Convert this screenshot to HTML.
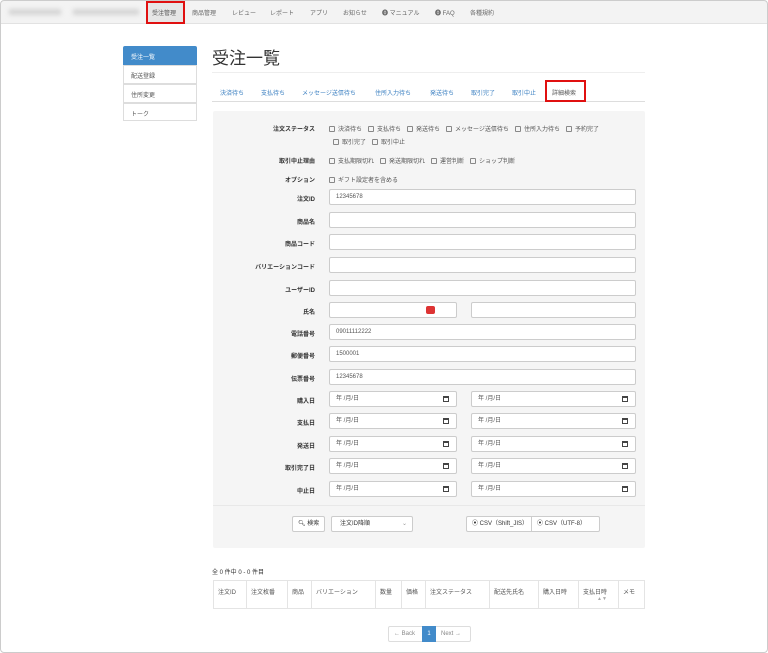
<!DOCTYPE html>
<html><head><meta charset="utf-8">
<style>
*{box-sizing:border-box;margin:0;padding:0}
body{width:768px;height:653px;background:#fff;font-family:"Liberation Sans","Noto Sans CJK JP",sans-serif;font-size:7px;color:#333;position:relative;overflow:hidden}
.a{position:absolute;white-space:nowrap}
.frame{position:absolute;left:0;top:0;width:768px;height:653px;border:1px solid #ccc;border-radius:4px}
.nav{position:absolute;left:1px;top:1px;width:766px;height:23px;background:#f3f3f3;border-bottom:1px solid #e2e2e2}
.blur{background:#d5d5d5;filter:blur(2px);height:6px;top:9px}
.ni{top:8px;color:#666;font-size:6px}
.side{position:absolute;left:123px;width:74px;height:19px;border:1px solid #ddd;padding:5px 7px;font-size:6px;color:#555}
.tab{top:88px;color:#3a7fc1;font-size:6px}
.lbl{position:absolute;right:453px;font-weight:bold;font-size:6px;color:#333;white-space:nowrap}
.in{position:absolute;background:#fff;border:1px solid #ccc;border-radius:2px;height:16px;font-size:6px;color:#555;padding:0 6px;line-height:14px}
.cb{display:inline-block;width:6px;height:6px;border:1px solid #888;border-radius:1px;vertical-align:-1px;margin-right:3px}
.ck{position:absolute;font-size:6px;color:#555;white-space:nowrap}
.cal{position:absolute;right:7px;top:4px;width:6px;height:6px;border:1px solid #444;border-top-width:2px}
.btn{position:absolute;background:#fff;border:1px solid #ccc;border-radius:2px;font-size:6px;padding:0 5px;line-height:14px;white-space:nowrap}
th{font-weight:normal;font-size:6px;color:#555;border-right:1px solid #e4e4e4;padding:6px 4px;text-align:left;vertical-align:top}
</style></head><body>
<div class="nav"></div>
<div class="a blur" style="left:9px;width:52px"></div>
<div class="a blur" style="left:73px;width:66px"></div>
<div class="a" style="left:146px;top:1px;width:39px;height:23px;border:2px solid #e01010;background:#e6e6e6"></div>
<div class="a ni" style="left:152px;color:#555">受注管理</div>
<div class="a ni" style="left:192px">商品管理</div>
<div class="a ni" style="left:232px">レビュー</div>
<div class="a ni" style="left:270px">レポート</div>
<div class="a ni" style="left:310px">アプリ</div>
<div class="a ni" style="left:343px">お知らせ</div>
<div class="a ni" style="left:382px">⓿ マニュアル</div>
<div class="a ni" style="left:435px">⓿ FAQ</div>
<div class="a ni" style="left:470px">各種規約</div>

<div class="side" style="top:46px;background:#428bca;border-color:#428bca;color:#fff;border-radius:2px 2px 0 0">受注一覧</div>
<div class="side" style="top:65px">配送登録</div>
<div class="side" style="top:84px">住所変更</div>
<div class="side" style="top:103px;height:18px">トーク</div>

<div class="a" style="left:212px;top:44px;font-size:17px;color:#333">受注一覧</div>
<div class="a" style="left:212px;top:72px;width:433px;height:1px;background:#eee"></div>
<div class="a tab" style="left:220px">決済待ち</div>
<div class="a tab" style="left:261px">支払待ち</div>
<div class="a tab" style="left:302px">メッセージ送信待ち</div>
<div class="a tab" style="left:375px">住所入力待ち</div>
<div class="a tab" style="left:430px">発送待ち</div>
<div class="a tab" style="left:471px">取引完了</div>
<div class="a tab" style="left:512px">取引中止</div>
<div class="a" style="left:212px;top:101px;width:433px;height:1px;background:#ddd"></div>
<div class="a" style="left:545px;top:80px;width:41px;height:22px;border:2px solid #e01010;background:#fff"></div>
<div class="a tab" style="left:552px;color:#555">詳細検索</div>

<div class="a" style="left:213px;top:111px;width:432px;height:437px;background:#f5f5f5;border-radius:2px"></div>

<div class="lbl" style="top:124px">注文ステータス</div>
<div class="ck" style="left:329px;top:124px"><span class="cb"></span>決済待ち　<span class="cb"></span>支払待ち　<span class="cb"></span>発送待ち　<span class="cb"></span>メッセージ送信待ち　<span class="cb"></span>住所入力待ち　<span class="cb"></span>予約完了</div>
<div class="ck" style="left:333px;top:137px"><span class="cb"></span>取引完了　<span class="cb"></span>取引中止</div>
<div class="lbl" style="top:156px">取引中止理由</div>
<div class="ck" style="left:329px;top:156px"><span class="cb"></span>支払期限切れ　<span class="cb"></span>発送期限切れ　<span class="cb"></span>運営判断　<span class="cb"></span>ショップ判断</div>
<div class="lbl" style="top:175px">オプション</div>
<div class="ck" style="left:329px;top:175px"><span class="cb"></span>ギフト設定者を含める</div>

<div class="lbl" style="top:194px">注文ID</div><div class="in" style="left:329px;top:189px;width:307px">12345678</div>
<div class="lbl" style="top:217px">商品名</div><div class="in" style="left:329px;top:212px;width:307px"></div>
<div class="lbl" style="top:239px">商品コード</div><div class="in" style="left:329px;top:234px;width:307px"></div>
<div class="lbl" style="top:262px">バリエーションコード</div><div class="in" style="left:329px;top:257px;width:307px"></div>
<div class="lbl" style="top:285px">ユーザーID</div><div class="in" style="left:329px;top:280px;width:307px"></div>
<div class="lbl" style="top:307px">氏名</div><div class="in" style="left:329px;top:302px;width:128px"><div class="a" style="left:96px;top:3px;width:9px;height:8px;background:#d33;border-radius:2px"></div></div><div class="in" style="left:471px;top:302px;width:165px"></div>
<div class="lbl" style="top:329px">電話番号</div><div class="in" style="left:329px;top:324px;width:307px">09011112222</div>
<div class="lbl" style="top:351px">郵便番号</div><div class="in" style="left:329px;top:346px;width:307px">1500001</div>
<div class="lbl" style="top:374px">伝票番号</div><div class="in" style="left:329px;top:369px;width:307px">12345678</div>

<div class="lbl" style="top:396px">購入日</div><div class="in" style="left:329px;top:391px;width:128px">年 /月/日<span class="cal"></span></div><div class="in" style="left:471px;top:391px;width:165px">年 /月/日<span class="cal"></span></div>
<div class="lbl" style="top:418px">支払日</div><div class="in" style="left:329px;top:413px;width:128px">年 /月/日<span class="cal"></span></div><div class="in" style="left:471px;top:413px;width:165px">年 /月/日<span class="cal"></span></div>
<div class="lbl" style="top:441px">発送日</div><div class="in" style="left:329px;top:436px;width:128px">年 /月/日<span class="cal"></span></div><div class="in" style="left:471px;top:436px;width:165px">年 /月/日<span class="cal"></span></div>
<div class="lbl" style="top:463px">取引完了日</div><div class="in" style="left:329px;top:458px;width:128px">年 /月/日<span class="cal"></span></div><div class="in" style="left:471px;top:458px;width:165px">年 /月/日<span class="cal"></span></div>
<div class="lbl" style="top:486px">中止日</div><div class="in" style="left:329px;top:481px;width:128px">年 /月/日<span class="cal"></span></div><div class="in" style="left:471px;top:481px;width:165px">年 /月/日<span class="cal"></span></div>

<div class="a" style="left:213px;top:505px;width:432px;height:1px;background:#e8e8e8"></div>
<div class="btn" style="left:292px;top:516px;width:33px;height:16px">&#x1F50D;&#xFE0E; 検索</div>
<div class="btn" style="left:331px;top:516px;width:82px;height:16px;padding-left:8px">注文ID降順<span style="position:absolute;right:5px;color:#999">⌄</span></div>
<div class="btn" style="left:466px;top:516px;width:66px;height:16px;border-radius:2px 0 0 2px">⦿ CSV（Shift_JIS）</div>
<div class="btn" style="left:531px;top:516px;width:69px;height:16px;border-radius:0 2px 2px 0">⦿ CSV（UTF-8）</div>

<div class="a" style="left:212px;top:567px;font-size:6px">全 0 件中 0 - 0 件目</div>
<table class="a" style="left:213px;top:580px;width:432px;height:27px;border:1px solid #e4e4e4;border-collapse:collapse">
<tr><th style="width:33px">注文ID</th><th style="width:41px">注文枚番</th><th style="width:24px">商品</th><th style="width:64px">バリエーション</th><th style="width:26px">数量</th><th style="width:24px">価格</th><th style="width:64px">注文ステータス</th><th style="width:49px">配送先氏名</th><th style="width:40px">購入日時</th><th style="width:40px">支払日時<br><span style="color:#aaa;font-size:5px;margin-left:14px">▲▼</span></th><th style="border:none">メモ</th></tr>
</table>

<div class="a" style="left:388px;top:626px;width:83px;height:16px;border:1px solid #ddd;border-radius:2px;background:#fff"></div>
<div class="a" style="left:422px;top:626px;width:14px;height:16px;background:#428bca;color:#fff;font-size:6px;text-align:center;line-height:16px">1</div>
<div class="a" style="left:394px;top:631px;font-size:6px;color:#888">← Back</div>
<div class="a" style="left:441px;top:631px;font-size:6px;color:#888">Next →</div>
<div class="frame"></div>
</body></html>
